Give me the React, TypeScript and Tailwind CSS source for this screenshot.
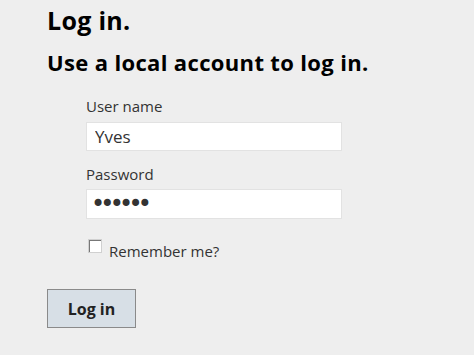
import React from 'react';

export default function App() {
  return (
    <div className="min-h-screen bg-[#eeeeee] pl-[47px] pt-[4px] text-[#111] font-['Open_Sans',sans-serif]">
      <h1 className="text-[25px] font-bold leading-[32px] text-black tracking-[0.3px]">Log in.</h1>
      <h2 className="mt-[12px] text-[22px] font-bold leading-[28px] text-black tracking-[0.35px]">Use a local account to log in.</h2>

      <form className="mt-[20px] flex flex-col">
        <div className="pl-[39px] flex flex-col">
          <label className="text-[15px] leading-[20px] text-[#333]">User name</label>
          <input
            type="text"
            defaultValue="Yves"
            className="mt-[6px] h-[29px] w-[256px] border border-[#e2e2e2] bg-white px-[8px] text-[17px] text-[#333] outline-none"
          />
          <label className="mt-[13px] text-[15px] leading-[20px] text-[#333]">Password</label>
          <input
            type="password"
            defaultValue="secret"
            className="mt-[5px] h-[30px] w-[256px] border border-[#e2e2e2] bg-white px-[4px] text-[24px] tracking-[-4.8px] text-[#333] outline-none font-['DejaVu_Sans',sans-serif]"
          />
          <label className="mt-[19px] flex items-end gap-[7px] text-[15px] text-[#333]">
            <span className="ml-[2px] mb-[5px] block h-[14px] w-[14px] border border-[#d0d0d0] bg-white shadow-[inset_1px_1px_0_#777]" />
            <span className="leading-[20px] translate-y-[3px]">Remember me?</span>
          </label>
        </div>
        <div className="mt-[31px]">
          <button
            type="button"
            className="h-[39px] w-[89px] border border-[#8a8a8a] bg-[#d7dfe6] text-[16px] font-bold text-[#222]"
          >
            Log in
          </button>
        </div>
      </form>
    </div>
  );
}
